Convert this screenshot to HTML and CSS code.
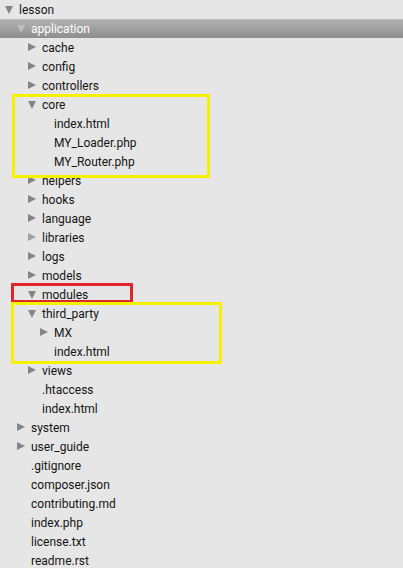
FILE: index.html
```html
<!DOCTYPE html>
<html>
<head>
<meta charset="utf-8">
<link rel="stylesheet" href="styles.css">
</head>
<body>
<div class="tree">
  <div class="row d0"><span class="tw down"></span><span class="name">lesson</span></div>
  <div class="row d1 selected"><span class="tw down light"></span><span class="name">application</span></div>
  <div class="row d2"><span class="tw right"></span><span class="name">cache</span></div>
  <div class="row d2"><span class="tw right"></span><span class="name">config</span></div>
  <div class="row d2"><span class="tw right"></span><span class="name">controllers</span></div>
  <div class="row d2"><span class="tw down"></span><span class="name">core</span></div>
  <div class="row d3"><span class="tw"></span><span class="name">index.html</span></div>
  <div class="row d3"><span class="tw"></span><span class="name">MY_Loader.php</span></div>
  <div class="row d3"><span class="tw"></span><span class="name">MY_Router.php</span></div>
  <div class="row d2"><span class="tw right"></span><span class="name">helpers</span></div>
  <div class="row d2"><span class="tw right"></span><span class="name">hooks</span></div>
  <div class="row d2"><span class="tw right"></span><span class="name">language</span></div>
  <div class="row d2"><span class="tw right pale"></span><span class="name">libraries</span></div>
  <div class="row d2"><span class="tw right"></span><span class="name">logs</span></div>
  <div class="row d2"><span class="tw right"></span><span class="name">models</span></div>
  <div class="row d2"><span class="tw down"></span><span class="name">modules</span></div>
  <div class="row d2"><span class="tw down"></span><span class="name">third_party</span></div>
  <div class="row d3"><span class="tw right"></span><span class="name">MX</span></div>
  <div class="row d3"><span class="tw"></span><span class="name">index.html</span></div>
  <div class="row d2"><span class="tw right"></span><span class="name">views</span></div>
  <div class="row d2"><span class="tw"></span><span class="name">.htaccess</span></div>
  <div class="row d2"><span class="tw"></span><span class="name">index.html</span></div>
  <div class="row d1"><span class="tw right"></span><span class="name">system</span></div>
  <div class="row d1"><span class="tw right"></span><span class="name">user_guide</span></div>
  <div class="row d1"><span class="tw"></span><span class="name">.gitignore</span></div>
  <div class="row d1"><span class="tw"></span><span class="name">composer.json</span></div>
  <div class="row d1"><span class="tw"></span><span class="name">contributing.md</span></div>
  <div class="row d1"><span class="tw"></span><span class="name">index.php</span></div>
  <div class="row d1"><span class="tw"></span><span class="name">license.txt</span></div>
  <div class="row d1"><span class="tw"></span><span class="name">readme.rst</span></div>
</div>
<div class="mark yellow box-core"></div>
<div class="mark red box-modules"></div>
<div class="mark yellow box-third"></div>
</body>
</html>
```
FILE: styles.css
```css
html, body {
  margin: 0;
  padding: 0;
  background: #e6e6e6;
  width: 403px;
  height: 568px;
  overflow: hidden;
}
body {
  position: relative;
  font-family: Roboto, "Noto Sans", sans-serif;
  font-size: 12px;
  color: #141414;
}
.tree {
  display: flex;
  flex-direction: column;
}
.row {
  height: 19px;
  display: flex;
  align-items: center;
  white-space: nowrap;
}
.d0 { padding-left: 5px; }
.d1 { padding-left: 17px; }
.d2 { padding-left: 28px; }
.d3 { padding-left: 40px; }
.tw {
  width: 9px;
  height: 9px;
  margin-right: 5px;
  flex: none;
  position: relative;
}
.tw.right::before {
  content: "";
  position: absolute;
  left: 0;
  top: 0;
  border-style: solid;
  border-width: 4.5px 0 4.5px 8px;
  border-color: transparent transparent transparent #858585;
}
.tw.down::before {
  content: "";
  position: absolute;
  left: 0;
  top: 1px;
  border-style: solid;
  border-width: 8px 4.5px 0 4.5px;
  border-color: #858585 transparent transparent transparent;
}
.tw.right.pale::before { border-left-color: #a0a0a0; }
.tw.down.light::before { border-top-color: #bdbdbd; }
.selected {
  background: linear-gradient(#b2b2b2, #a4a4a4 40%, #8e8e8e);
  box-shadow: inset 0 1px 0 #bcbcbc;
  color: #ffffff;
}
.mark {
  position: absolute;
  box-sizing: border-box;
  border: 3px solid;
}
.yellow { border-color: #f7f000; }
.red { border-color: #e0252c; }
.box-core { left: 12px; top: 94px; width: 198px; height: 84px; }
.box-modules { left: 11px; top: 283px; width: 122px; height: 20px; }
.box-third { left: 11px; top: 302px; width: 211px; height: 62px; }
```
